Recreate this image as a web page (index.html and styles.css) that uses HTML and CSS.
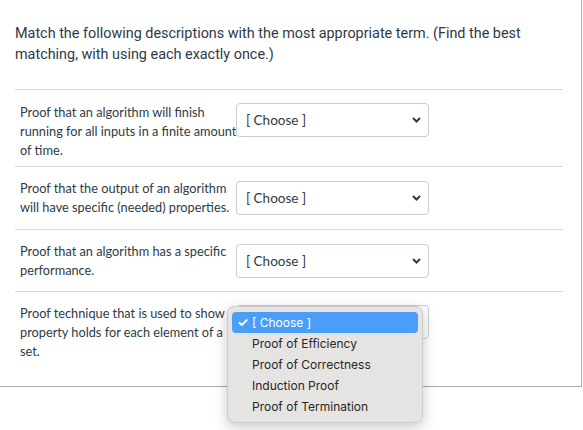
FILE: index.html
```html
<!DOCTYPE html>
<html>
<head>
<meta charset="utf-8">
<link rel="stylesheet" href="styles.css">
</head>
<body>
<div class="quiz">
  <div class="question">Match the following descriptions with the most appropriate term. (Find the best matching, with using each exactly once.)</div>
  <div class="answers">
    <div class="row r1">
      <div class="label">Proof that an algorithm will finish running for all inputs in a finite amount of time.</div>
      <div class="select"><span>[ Choose ]</span><svg class="chev" width="9" height="6" viewBox="0 0 9 6"><path d="M1 1 L4.5 4.5 L8 1" fill="none" stroke="#2d3b45" stroke-width="2"/></svg></div>
    </div>
    <div class="row r2">
      <div class="label">Proof that the output of an algorithm will have specific (needed) properties.</div>
      <div class="select"><span>[ Choose ]</span><svg class="chev" width="9" height="6" viewBox="0 0 9 6"><path d="M1 1 L4.5 4.5 L8 1" fill="none" stroke="#2d3b45" stroke-width="2"/></svg></div>
    </div>
    <div class="row r3">
      <div class="label">Proof that an algorithm has a specific performance.</div>
      <div class="select"><span>[ Choose ]</span><svg class="chev" width="9" height="6" viewBox="0 0 9 6"><path d="M1 1 L4.5 4.5 L8 1" fill="none" stroke="#2d3b45" stroke-width="2"/></svg></div>
    </div>
    <div class="row r4">
      <div class="label">Proof technique that is used to show a property holds for each element of a set.</div>
      <div class="select open"><span class="value">[ Choose ]</span><svg class="chev" width="9" height="6" viewBox="0 0 9 6"><path d="M1 1 L4.5 4.5 L8 1" fill="none" stroke="#2d3b45" stroke-width="2"/></svg>
        <div class="popup">
          <div class="opt sel"><span class="check">✓</span>[ Choose ]</div>
          <div class="opt">Proof of Efficiency</div>
          <div class="opt">Proof of Correctness</div>
          <div class="opt">Induction Proof</div>
          <div class="opt">Proof of Termination</div>
        </div>
      </div>
    </div>
  </div>
</div>
</body>
</html>
```
FILE: styles.css
```css
html, body {
  margin: 0;
  padding: 0;
  background: #fff;
}
body {
  min-height: 430px;
}
.quiz {
  box-sizing: content-box;
  width: 548px;
  border-right: 1px solid #a9a9a9;
  border-bottom: 1px solid #a9a9a9;
  padding: 0 18px 0 15px;
  color: #2d3b45;
}
.question {
  font-family: Roboto, "Liberation Sans", sans-serif;
  font-size: 14.4px;
  line-height: 21px;
  padding: 23px 0 24px 0;
}
.row {
  display: flex;
  border-top: 1px solid #dadada;
  padding-left: 5px;
}
.label {
  width: 220px;
  flex: none;
  font-family: Lato, "Liberation Sans", sans-serif;
  font-size: 12.75px;
  line-height: 19px;
  color: #2d3b45;
}
.select {
  position: relative;
  flex: none;
  box-sizing: border-box;
  width: 193px;
  height: 34px;
  margin-left: -4px;
  border: 1px solid #c7cdd1;
  border-radius: 4px;
  background: #fff;
  display: flex;
  align-items: center;
  justify-content: space-between;
  padding: 0 7px 0 9px;
  font-family: Lato, "Liberation Sans", sans-serif;
  font-size: 13.5px;
  color: #2d3b45;
}
.r1 { padding-top: 13px; padding-bottom: 6px; align-items: flex-start; }
.r2 { padding-top: 12px; padding-bottom: 12px; align-items: center; }
.r3 { padding-top: 12px; padding-bottom: 11px; align-items: center; }
.r4 { padding-top: 12px; padding-bottom: 25px; align-items: flex-start; }
.r4 .select { margin-top: 1px; }
.select.open .value { visibility: hidden; }
.popup {
  position: absolute;
  left: -10px;
  top: 0;
  width: 196px;
  height: 117px;
  box-sizing: border-box;
  background: #e6e4e2;
  border: 1px solid #cfcdcb;
  border-radius: 7px;
  box-shadow: 0 4px 14px rgba(0,0,0,0.22);
  padding: 5px 4px;
  font-family: Inter, "Noto Sans", sans-serif;
  font-size: 12px;
  color: #262626;
  z-index: 5;
}
.opt {
  height: 21px;
  line-height: 21px;
  padding-left: 20px;
  position: relative;
  border-radius: 4px;
}
.opt.sel {
  background: #4a9ef8;
  color: #fff;
}
.check {
  position: absolute;
  left: 5px;
  top: 0;
  font-size: 13px;
  font-weight: bold;
}
```
